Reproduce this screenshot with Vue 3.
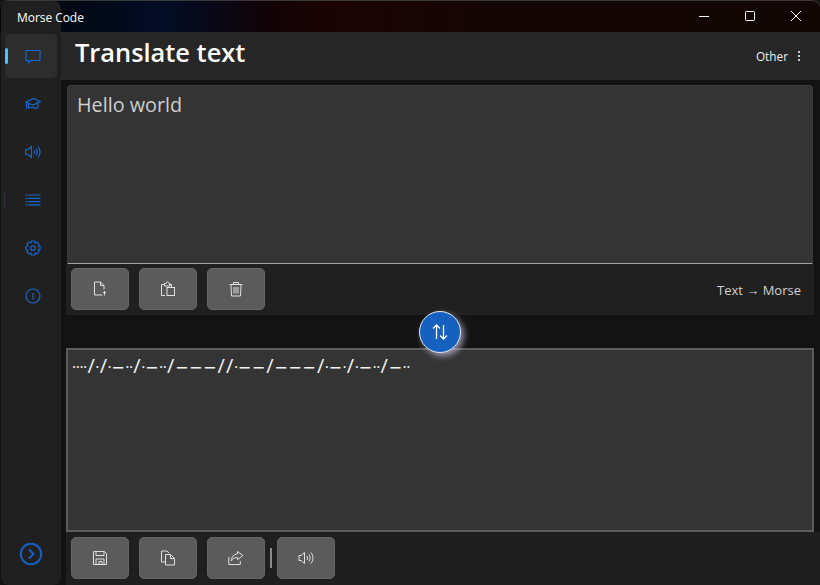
<script setup>
const navItems = ['chat', 'learn', 'sound', 'list', 'gear', 'info']
const morse = '····/·/·−··/·−··/−−−//·−−/−−−/·−·/·−··/−··'
const kinds = { '·': 'dot', '−': 'dash', '/': 'slash' }
const morseChars = [...morse].map((char, id) => ({ id, char, kind: kinds[char] }))

// Eight-toothed gear outline for the settings icon
const gearPath = (() => {
  const pts = []
  for (let i = 0; i < 8; i++) {
    const a = (i * Math.PI) / 4
    for (const [r, da] of [[5.6, -0.36], [7.2, -0.22], [7.2, 0.22], [5.6, 0.36]]) {
      pts.push(`${(8 + r * Math.sin(a + da)).toFixed(2)} ${(8 - r * Math.cos(a + da)).toFixed(2)}`)
    }
  }
  return `M${pts.join('L')}z`
})()
</script>

<template>
  <div class="window">
    <header class="titlebar">
      <div class="controls">
        <svg width="12" height="12" viewBox="0 0 12 12"><path d="M1 6.5h10" stroke="#fff" /></svg>
        <svg width="12" height="12" viewBox="0 0 12 12"><rect x="1.5" y="1.5" width="9" height="9" rx="1" fill="none" stroke="#fff" /></svg>
        <svg width="12" height="12" viewBox="0 0 12 12"><path d="M1 1l10 10M11 1L1 11" stroke="#fff" fill="none" /></svg>
      </div>
    </header>

    <aside class="sidebar">
      <div class="app-title">Morse Code</div>
      <nav class="nav">
        <div v-for="(item, i) in navItems" :key="item" class="nav-item" :class="{ active: i === 0, faint: i === 3 }">
          <svg v-if="item === 'chat'" width="16" height="16" viewBox="0 0 16 16" class="nav-icon"><path d="M1 2.500h14v10H6l-2.500 2.300V12.500H1z" /></svg>
          <svg v-else-if="item === 'learn'" width="16" height="16" viewBox="0 0 16 16" class="nav-icon"><path d="M.8 6L8.500 2.500 15.200 5.500 8 9z" /><path d="M3.500 7.500v4.500c2-.8 5-.8 7.500.5l2-1.500V6.500" /><path d="M1.500 6.500v6.500" /></svg>
          <svg v-else-if="item === 'sound'" width="16" height="16" viewBox="0 0 16 16" class="nav-icon"><path d="M.8 5.500H3L6.500 2.500v11L3 10.500H.8z" /><path d="M9 6c.8 1.300.8 2.700 0 4" /><path d="M11 4.500c1.500 2.200 1.500 4.800 0 7" /><path d="M13 2.500c2.500 3.300 2.500 7.700 0 11" /></svg>
          <svg v-else-if="item === 'list'" width="16" height="16" viewBox="0 0 16 16" class="nav-icon"><path d="M.5 3h2M.5 6.300h2M.5 9.600h2M.5 12.900h2M3.500 3h12M3.500 6.300h12M3.500 9.600h12M3.500 12.900h12" /></svg>
          <svg v-else-if="item === 'gear'" width="16" height="16" viewBox="0 0 16 16" class="nav-icon"><path :d="gearPath" /><circle cx="8" cy="8" r="2.300" /></svg>
          <svg v-else width="16" height="16" viewBox="0 0 16 16" class="nav-icon"><circle cx="8" cy="8" r="7" /><path d="M8 5v6.500" /></svg>
        </div>
      </nav>
      <div class="expand">
        <svg width="24" height="24" viewBox="0 0 24 24" fill="none" stroke="#1660c0"><circle cx="12" cy="12" r="10.200" stroke-width="2" /><path d="M10 7.500l4.500 4.500-4.500 4.500" stroke-width="2" /></svg>
      </div>
    </aside>

    <main class="main">
      <div class="page-head">
        <h1>Translate text</h1>
        <div class="other"><span>Other</span><span class="dots"><i></i><i></i><i></i></span></div>
      </div>

      <section class="panel-wrap">
        <div class="text-box input-box">Hello world</div>
        <div class="toolbar top-tools">
          <button class="tool">
            <svg width="16" height="16" viewBox="0 0 16 16" class="tool-icon"><path d="M12 8.500V4.500L8.500 1H2.500v13h8" /><path d="M8.500 1v3.500H12" /><path d="M12.500 14.500v-4M11 12l1.500-1.500L14 12" /></svg>
          </button>
          <button class="tool">
            <svg width="16" height="16" viewBox="0 0 16 16" class="tool-icon"><path d="M5 14.500H1.500v-11H4M9 3.500h2.500V6" /><path d="M4.500 2.500h1.500a1.500 1.500 0 0 1 3 0h1V5h-5.500z" /><rect x="7" y="6.500" width="7.500" height="8" /></svg>
          </button>
          <button class="tool">
            <svg width="16" height="16" viewBox="0 0 16 16" class="tool-icon"><path d="M1.500 3.500h13M5.500 3.500V1.500h5v2M3 3.500l.5 11.500h9L13 3.500M6 6v6.500M8 6v6.500M10 6v6.500" /></svg>
          </button>
          <span class="direction">Text → Morse</span>
        </div>
      </section>

      <div class="swap-gap">
        <button class="swap">
          <svg width="16" height="16" viewBox="0 0 16 16" fill="none" stroke="#fff" stroke-width="1.300"><path d="M4.500 15V1M1 4.500L4.500 1 8 4.500" /><path d="M11.500 1v14M8 11.500l3.500 3.500 3.500-3.500" /></svg>
        </button>
      </div>

      <div class="text-box output-box"><span v-for="c in morseChars" :key="c.id" :class="c.kind">{{ c.char }}</span></div>
      <div class="toolbar bottom-tools">
        <button class="tool">
          <svg width="16" height="16" viewBox="0 0 16 16" class="tool-icon"><path d="M2.500 1.500h10l2 2v11h-13v-13z" /><path d="M4 1.500v4h8v-4M4 14.500v-5.500h8v5.500" /><path d="M7 11.500h3v3H7z" /></svg>
        </button>
        <button class="tool">
          <svg width="16" height="16" viewBox="0 0 16 16" class="tool-icon"><path d="M5.500 12H1.500V1h5.500l2 2" /><path d="M5.500 4.500h5l4 4v6.500h-9z" /><path d="M10.500 4.500v4h4" /></svg>
        </button>
        <button class="tool">
          <svg width="16" height="16" viewBox="0 0 16 16" class="tool-icon"><path d="M.8 7v7.500h11.500V11" /><path d="M9.500 1.500l5.500 4-5.500 4.200V7.500C7 7.300 4.500 8.300 3.300 11c0-4 2.500-7 6.200-7.200z" /></svg>
        </button>
        <span class="divider"></span>
        <button class="tool">
          <svg width="16" height="16" viewBox="0 0 16 16" class="tool-icon"><path d="M1 5.500h2L6.500 2.500v11L3 10.500H1z" /><path d="M9 6c.8 1.300.8 2.700 0 4" /><path d="M11 4.500c1.500 2.200 1.500 4.800 0 7" /><path d="M13 2.500c2.500 3.300 2.500 7.700 0 11" /></svg>
        </button>
      </div>
    </main>
  </div>
</template>

<style>
html, body { margin: 0; background: #131313; overflow: hidden; }
</style>

<style scoped>
.window {
  position: relative;
  width: 820px;
  height: 585px;
  overflow: hidden;
  display: flex;
  flex-direction: column;
  font-family: "Open Sans", "Noto Sans", sans-serif;
  color: #fff;
  background: #131313;
}
.titlebar {
  height: 32px;
  flex: none;
  display: flex;
  justify-content: flex-end;
  padding-right: 1px;
  background: linear-gradient(90deg, #05060a 0%, #020a18 12%, #020c25 20%, #120306 33%, #1c0303 40%, #140604 60%, #120605 100%);
  border-radius: 8px 8px 0 0;
  box-shadow: inset 0 1px 0 #3a3a3a;
}
.controls { display: flex; align-items: center; }
.controls svg { width: 46px; }
.sidebar {
  position: absolute;
  left: 1px;
  top: 1px;
  bottom: 0;
  width: 60px;
  background: #202020;
  border-radius: 8px;
  display: flex;
  flex-direction: column;
}
.app-title { font-size: 12px; padding: 8px 0 0 16px; height: 25px; white-space: nowrap; box-sizing: border-box; line-height: 18px; width: 100px; letter-spacing: -0.05px; }
.nav { display: flex; flex-direction: column; gap: 4px; padding: 8px 4px 0 4px; }
.nav-item {
  position: relative;
  height: 44px;
  box-sizing: border-box;
  padding-left: 4px;
  border-radius: 5px;
  display: flex;
  align-items: center;
  justify-content: center;
}
.nav-item.active { background: #2d2d2d; }
.nav-item.active::before {
  content: "";
  position: absolute;
  left: 0;
  top: 14px;
  width: 3px;
  height: 16px;
  border-radius: 2px;
  background: #4cc2ff;
}
.nav-item.faint::before {
  content: "";
  position: absolute;
  left: -1px;
  top: 14px;
  width: 1px;
  height: 16px;
  background: #2c3644;
}
.nav-icon { fill: none; stroke: #1868cc; stroke-width: 1.15; }
.expand { margin-top: auto; padding: 0 0 19px 18px; display: flex; }
.main {
  flex: 1;
  min-height: 0;
  margin-left: 61px;
  display: flex;
  flex-direction: column;
  background: #131313;
}
.page-head {
  height: 48px;
  flex: none;
  box-sizing: border-box;
  padding: 0 20px 0 14px;
  background: #272727;
  display: flex;
  align-items: center;
  justify-content: space-between;
}
h1 { margin: 0 0 7px; font-size: 25.4px; font-weight: 600; line-height: 41px; }
.other { display: flex; align-items: center; gap: 10px; font-size: 11.800px; color: #f0f0f0; }
.dots { display: flex; flex-direction: column; gap: 2px; }
.dots i { width: 2px; height: 2px; background: #c8c8c8; display: block; }
.panel-wrap { margin: 5px 6px 0 5px; flex: none; }
.text-box { box-sizing: border-box; background: #343434; }
.input-box {
  height: 179px;
  margin: 0 1px;
  border: 1px solid #3a3a3a;
  border-bottom: 1px solid #a0a0a0;
  border-radius: 4px 4px 0 0;
  padding: 6px 9px;
  font-size: 19.800px;
  line-height: 26px;
  color: #cfcfcf;
}
.toolbar { display: flex; align-items: center; gap: 10px; padding-left: 5px; background: #202020; }
.top-tools { height: 51px; box-sizing: border-box; padding-bottom: 1px; }
.direction { margin-left: auto; padding: 2px 13px 0 0; font-size: 13px; color: #d0d0d0; }
.tool {
  width: 58px;
  height: 42px;
  padding: 0;
  box-sizing: border-box;
  border: 1px solid #656565;
  border-radius: 5px;
  background: #5b5b5b;
  display: flex;
  align-items: center;
  justify-content: center;
}
.tool-icon { fill: none; stroke: #e0e0e0; stroke-width: 1; }
.swap-gap { height: 33px; flex: none; display: flex; justify-content: center; position: relative; }
.swap {
  position: absolute;
  left: 358px;
  top: -4px;
  width: 42px;
  height: 42px;
  padding: 0;
  border-radius: 50%;
  border: 1px solid #dfe8f5;
  background: #1660c0;
  box-shadow: 3px 3px 6px rgba(205, 195, 230, .7);
  display: flex;
  align-items: center;
  justify-content: center;
}
.output-box {
  flex: none;
  height: 184px;
  margin: 0 6px 0 5px;
  border: 2px solid #5c5c5c;
  padding: 5px 4px;
  font-family: "DejaVu Sans", sans-serif;
  font-size: 16px;
  line-height: 24px;
  color: #f2f2f2;
  white-space: nowrap;
}
.dot { font-family: "Open Sans", sans-serif; letter-spacing: -0.5px; }
.dash { letter-spacing: 0.6px; }
.slash { font-family: "Open Sans", sans-serif; font-size: 20px; padding: 0 .6px; line-height: 20px; }
.bottom-tools { flex: 1; margin-left: 5px; align-items: flex-start; padding-top: 5px; box-sizing: border-box; background: #1f1f1f; }
.divider { width: 2px; height: 20px; background: #8a8a8a; margin: 11px -5px 0 -5px; }
</style>
